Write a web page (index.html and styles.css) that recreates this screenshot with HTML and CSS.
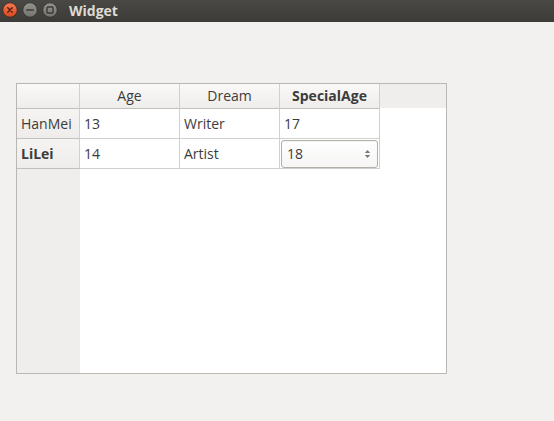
FILE: index.html
```html
<!DOCTYPE html>
<html>
<head>
<meta charset="utf-8">
<link rel="stylesheet" href="styles.css">
</head>
<body>
<div class="titlebar">
  <div class="buttons">
    <svg class="btn" width="16" height="16" viewBox="0 0 16 16">
      <defs>
        <linearGradient id="gc" x1="0" y1="0" x2="0" y2="1">
          <stop offset="0" stop-color="#f47a52"/>
          <stop offset="1" stop-color="#d9471d"/>
        </linearGradient>
        <linearGradient id="gg" x1="0" y1="0" x2="0" y2="1">
          <stop offset="0" stop-color="#95938d"/>
          <stop offset="1" stop-color="#75736e"/>
        </linearGradient>
      </defs>
      <circle cx="8" cy="8" r="7.2" fill="url(#gc)" stroke="#3a2a22" stroke-width="0.8"/>
      <path d="M5.8 5.8 L10.2 10.2 M10.2 5.8 L5.8 10.2" stroke="#4a1d0e" stroke-width="1.3" stroke-linecap="round"/>
    </svg>
    <svg class="btn" width="16" height="16" viewBox="0 0 16 16">
      <circle cx="8" cy="8" r="7.2" fill="url(#gg)" stroke="#34332f" stroke-width="0.8"/>
      <path d="M4.8 8 L11.2 8" stroke="#3b3a36" stroke-width="1.6" stroke-linecap="round"/>
    </svg>
    <svg class="btn" width="16" height="16" viewBox="0 0 16 16">
      <circle cx="8" cy="8" r="7.2" fill="url(#gg)" stroke="#34332f" stroke-width="0.8"/>
      <rect x="5" y="5" width="6" height="6" rx="0.8" fill="none" stroke="#3b3a36" stroke-width="1.4"/>
    </svg>
  </div>
  <div class="title">Widget</div>
</div>

<div class="content">
  <div class="table">
    <div class="hrow">
      <div class="hcell corner"></div>
      <div class="hcell col">Age</div>
      <div class="hcell col">Dream</div>
      <div class="hcell col bold">SpecialAge</div>
      <div class="hfill"></div>
    </div>
    <div class="body">
      <div class="vheader">
        <div class="vcell">HanMei</div>
        <div class="vcell bold">LiLei</div>
      </div>
      <div class="data">
        <div class="drow">
          <div class="dcell">13</div>
          <div class="dcell">Writer</div>
          <div class="dcell">17</div>
        </div>
        <div class="drow">
          <div class="dcell">14</div>
          <div class="dcell">Artist</div>
          <div class="dcell editcell">
            <div class="spin">
              <span class="spinval">18</span>
              <svg class="arrows" width="7" height="12" viewBox="0 0 7 12">
                <path d="M0.8 5 L3.5 2 L6.2 5 Z" fill="#7a7873"/>
                <path d="M0.8 7 L3.5 10 L6.2 7 Z" fill="#7a7873"/>
              </svg>
            </div>
          </div>
        </div>
      </div>
    </div>
  </div>
</div>
</body>
</html>
```

FILE: styles.css
```css
html, body {
  margin: 0;
  padding: 0;
}
body {
  width: 554px;
  height: 421px;
  background: #f2f1f0;
  font-family: "Open Sans", "Noto Sans", sans-serif;
  font-size: 14px;
  color: #3c3c3c;
  overflow: hidden;
}
.titlebar {
  height: 22px;
  background: linear-gradient(#4a4844, #3c3b37);
  display: flex;
  align-items: center;
}
.buttons {
  display: flex;
  gap: 4px;
  padding-left: 2px;
  margin-top: -3px;
}
.btn {
  display: block;
}
.title {
  margin-left: 11px;
  color: #dfdbd2;
  font-weight: bold;
  font-size: 14px;
  margin-top: -2px;
}
.content {
  padding: 61px 0 0 16px;
}
.table {
  width: 429px;
  height: 289px;
  border: 1px solid #bab7b2;
  display: flex;
  flex-direction: column;
  background: #ffffff;
}
.hrow {
  display: flex;
  height: 24px;
  flex: none;
}
.hcell {
  box-sizing: border-box;
  height: 25px;
  border-right: 1px solid #d2d0cc;
  border-bottom: 1px solid #c2c0bb;
  background: linear-gradient(#f9f9f8, #eeedeb);
  text-align: center;
  line-height: 24px;
}
.corner {
  width: 63px;
}
.col {
  width: 100px;
}
.hfill {
  flex: 1;
  height: 24px;
  background: #efeeec;
}
.bold {
  font-weight: bold;
}
.body {
  flex: 1;
  display: flex;
  margin-top: 1px;
}
.vheader {
  width: 63px;
  background: #efeeec;
  flex: none;
}
.vcell {
  box-sizing: border-box;
  height: 30px;
  border-right: 1px solid #d2d0cc;
  border-bottom: 1px solid #c2c0bb;
  background: linear-gradient(#f5f4f3, #eeedeb);
  padding-left: 4px;
  line-height: 29px;
}
.data {
  flex: 1;
}
.drow {
  display: flex;
  height: 30px;
}
.dcell {
  box-sizing: border-box;
  width: 100px;
  height: 30px;
  border-right: 1px solid #d2d0cc;
  border-bottom: 1px solid #d2d0cc;
  padding-left: 4px;
  line-height: 29px;
}
.editcell {
  padding: 1px 1px 1px 1px;
}
.spin {
  box-sizing: border-box;
  height: 28px;
  border: 1px solid #b3afa9;
  border-radius: 3px;
  background: linear-gradient(#ffffff, #f6f5f4);
  display: flex;
  align-items: center;
  justify-content: space-between;
  padding: 0 6px 0 5px;
  box-shadow: inset 0 1px 1px rgba(0,0,0,0.05);
}
.spinval {
  line-height: 26px;
}
.arrows {
  display: block;
}
```
